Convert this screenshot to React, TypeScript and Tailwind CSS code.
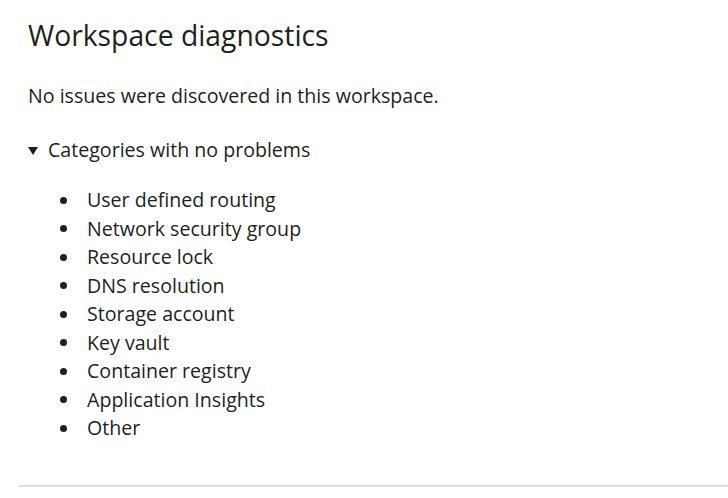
import React from 'react';

const categories = [
  'User defined routing',
  'Network security group',
  'Resource lock',
  'DNS resolution',
  'Storage account',
  'Key vault',
  'Container registry',
  'Application Insights',
  'Other',
];

export default function App() {
  return (
    <div className="w-[728px] h-[498px] bg-white text-[#201f1e] font-['Open_Sans',sans-serif] overflow-hidden">
      <div className="pl-[28px] pt-[15px]">
        <h1 className="text-[28.3px] leading-[40px] font-normal">Workspace diagnostics</h1>
        <p className="mt-[27px] text-[19.6px] leading-[28px]">No issues were discovered in this workspace.</p>
        <details open className="mt-[26px]">
          <summary className="list-none flex items-center text-[19.6px] leading-[28px] cursor-pointer">
            <svg width="10" height="8" viewBox="0 0 10 8" className="mr-[10px] mt-[1px]">
              <polygon points="0,0 10,0 5,8" fill="#201f1e" />
            </svg>
            Categories with no problems
          </summary>
          <ul className="mt-[22px] pl-[32px]">
            {categories.map((c) => (
              <li key={c} className="flex items-center text-[19.6px] leading-[28.5px]">
                <span className="w-[7px] h-[7px] rounded-full bg-[#201f1e] mr-[20px]" />
                {c}
              </li>
            ))}
          </ul>
        </details>
      </div>
      <div className="ml-[19px] mt-[42px] h-[2px] bg-[#e1dfdd]" />
    </div>
  );
}
